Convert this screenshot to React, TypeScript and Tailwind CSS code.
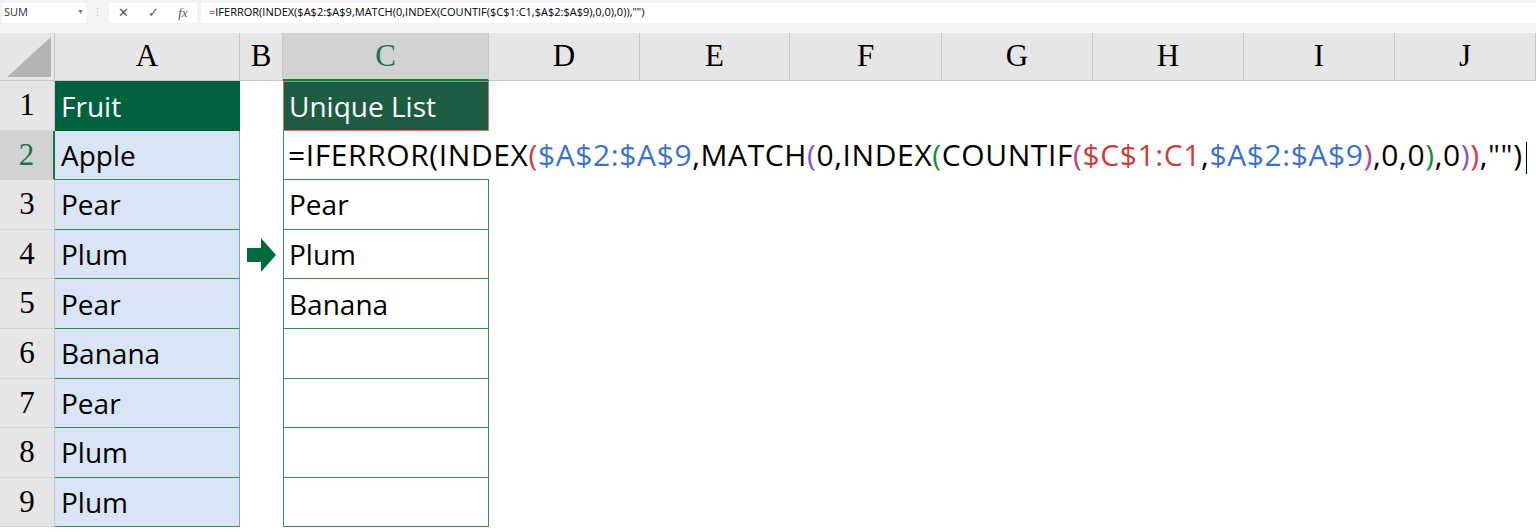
import React from "react";

const cols = ["A","B","C","D","E","F","G","H","I","J"];
const fruits = ["Apple","Pear","Plum","Pear","Banana","Pear","Plum","Plum"];
const uniq = ["", "Pear","Plum","Banana","","","",""];
const serif = { fontFamily: '"Liberation Serif", serif' };
const sans = { fontFamily: '"Open Sans", "Noto Sans", sans-serif' };

function Formula() {
  const p: [string, string][] = [
    ["=IFERROR(INDEX", "#000"], ["(", "#d03a3a"], ["$A$2:$A$9", "#3a72d0"], [",MATCH", "#000"],
    ["(", "#8a52c8"], ["0,INDEX", "#000"], ["(", "#1f8a3a"], ["COUNTIF", "#000"], ["(", "#b8408e"],
    ["$C$1:C1", "#d03a3a"], [",", "#000"], ["$A$2:$A$9", "#3a72d0"], [")", "#b8408e"], [",0,0", "#000"],
    [")", "#1f8a3a"], [",0", "#000"], [")", "#8a52c8"], [")", "#d03a3a"], [',"")', "#000"],
  ];
  return (
    <span className="whitespace-nowrap tracking-[0.6px] text-[30px]">
      {p.map(([t, c], i) => <span key={i} style={{ color: c }}>{t}</span>)}
      <span className="inline-block w-[1px] h-[32px] bg-black align-middle ml-[3px]" />
    </span>
  );
}

export default function App() {
  return (
    <div className="w-[1536px] h-[532px] overflow-hidden bg-white relative">
      <div className="h-[25px] bg-[#f3f3f3] flex items-center text-[11px] text-[#333]" style={sans}>
        <div className="w-[84px] h-[20px] bg-white ml-[2px] flex items-center justify-between px-[2px]">
          <span>SUM</span><span className="text-[7px] text-[#777]">▼</span>
        </div>
        <span className="mx-[6px] text-[#bbb]">⋮</span>
        <div className="w-[88px] h-[20px] bg-white flex items-center justify-around text-[#555] text-[13px]">
          <span>✕</span><span>✓</span><span className="italic" style={serif}>fx</span>
        </div>
        <div className="flex-1 h-[20px] bg-white ml-[4px] flex items-center pl-[8px] text-black">
          =IFERROR(INDEX($A$2:$A$9,MATCH(0,INDEX(COUNTIF($C$1:C1,$A$2:$A$9),0,0),0)),"")
        </div>
      </div>
      <div className="h-[8px] bg-[#f3f3f3]" />
      <div className="grid grid-cols-[55px_185px_43px_206px_151px_150px_152px_151px_151px_151px_1fr] grid-rows-[48px_repeat(9,49.6px)]">
        <div className="bg-[#e6e6e6] border-r border-b border-[#c8c8c8] relative overflow-hidden">
          <div className="absolute right-[3px] bottom-[3px] w-0 h-0 border-l-[44px] border-l-transparent border-b-[40px] border-b-[#b4b4b4]" />
        </div>
        {cols.map((c) => (
          <div key={c} className={`${c === "C" ? "bg-[#d2d2d2] text-[#217346] border-b-2 border-b-[#217346]" : "bg-[#e6e6e6] text-black border-b border-b-[#c8c8c8]"} border-r border-r-[#c8c8c8] flex items-center justify-center text-[31px]`} style={serif}>{c}</div>
        ))}
        {Array.from({ length: 9 }).map((_, r) => {
          const row = r + 1;
          return (
            <React.Fragment key={row}>
              <div className={`${row === 2 ? "bg-[#d2d2d2] text-[#217346] border-r-2 border-r-[#217346]" : "bg-[#e6e6e6] text-black border-r border-r-[#c8c8c8]"} border-b border-b-[#d4d4d4] flex items-center justify-center text-[31px]`} style={serif}>{row}</div>
              {row === 1 ? (
                <div className="bg-[#00613f] text-white text-[28px] flex items-center pl-[6px]" style={sans}>Fruit</div>
              ) : (
                <div className="bg-[#d9e4f4] border-b border-b-[#3c8a5c] border-r border-r-[#7ba0e0] text-[28px] text-black flex items-center pl-[6px]" style={sans}>{fruits[row - 2]}</div>
              )}
              <div className="flex items-center justify-center">
                {row === 4 && (
                  <svg width="31" height="36" viewBox="0 0 31 36"><path d="M1 11h14V1l15 17-15 17V25H1z" fill="#006b3d" /></svg>
                )}
              </div>
              {row === 1 ? (
                <div className="bg-[#1d5c41] text-white text-[28px] flex items-center pl-[5px] border border-[#d0707a]" style={sans}>Unique List</div>
              ) : row === 2 ? (
                <div className="border-l border-l-[#3c8a5c] border-b border-b-[#3c8a5c] text-black flex items-center pl-[4px] overflow-visible z-10 relative" style={sans}><Formula /></div>
              ) : (
                <div className="border-x border-[#3c8a5c] border-b border-b-[#3c8a5c] text-[28px] text-black flex items-center pl-[5px]" style={sans}>{uniq[row - 2]}</div>
              )}
              {Array.from({ length: 7 }).map((_, i) => <div key={i} />)}
            </React.Fragment>
          );
        })}
      </div>
    </div>
  );
}
